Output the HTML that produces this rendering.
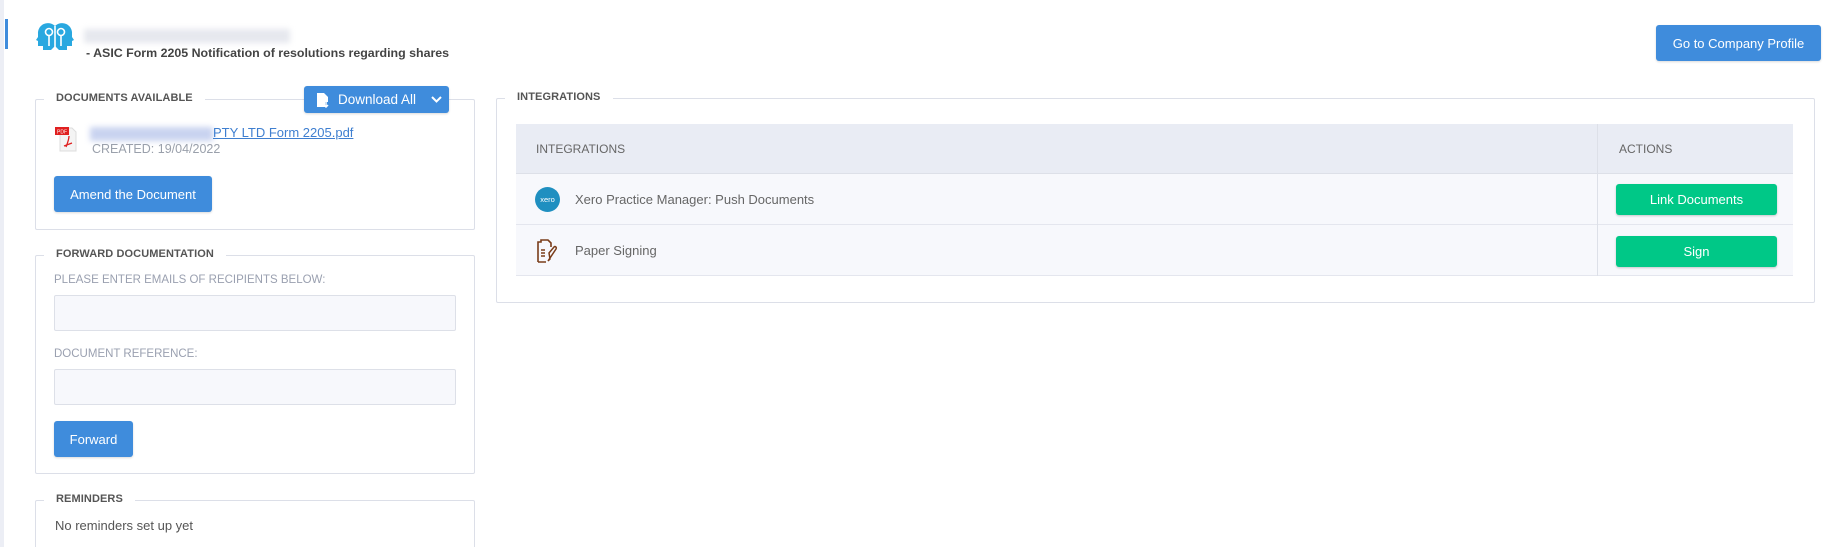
<!DOCTYPE html>
<html style="width:1840px;height:547px;overflow:hidden"><head><meta charset="utf-8">
<style>
*{box-sizing:border-box;margin:0;padding:0}
body{width:1840px;height:547px;overflow:hidden;background:#fff;font-family:"Liberation Sans",sans-serif;position:relative;color:#555}
.a{position:absolute}
.fs{position:absolute;border:1px solid #dcdfe8;border-radius:2px}
.lg{position:absolute;top:-8px;background:#fff;padding:0 12px;font-size:11px;font-weight:bold;color:#555;letter-spacing:.1px}
.btn{position:absolute;background:#3f8cdc;color:#fff;border-radius:3px;font-size:13px;display:flex;align-items:center;justify-content:center;box-shadow:0 1px 2px rgba(0,0,0,.15)}
.gbtn{position:absolute;background:#00c887;color:#fff;border-radius:3px;font-size:13px;display:flex;align-items:center;justify-content:center;box-shadow:0 1px 2px rgba(0,0,0,.2)}
.inp{position:absolute;background:#f7f8fc;border:1px solid #dde0e8;border-radius:2px}
.lbl{position:absolute;font-size:11.5px;color:#9aa0b0}
</style></head><body>
<div class="a" style="left:0;top:0;width:4px;height:547px;background:#eceef5"></div>
<div class="a" style="left:5px;top:19px;width:3px;height:30px;background:#3f8cdc"></div>
<svg class="a" style="left:36px;top:20px" width="38" height="30" viewBox="0 0 38 30">
<path d="M2 14a10 10 0 0 1 17-8 10 10 0 0 1 17 8v3l2 3-2 1v5h-5v4h-8l-4-4-4 4H7v-4H2v-5L0 20l2-3z" fill="#29a8e0"/>
<circle cx="13" cy="12" r="3.5" fill="none" stroke="#fff" stroke-width="1.6"/><circle cx="25" cy="12" r="3.5" fill="none" stroke="#fff" stroke-width="1.6"/>
<path d="M13 16v10M25 16v10M19 6v22" stroke="#fff" stroke-width="1.6"/></svg>
<div class="a" style="left:84px;top:29px;width:206px;height:14px;background:#e6e8ee;filter:blur(3px)"></div>
<div class="a" style="left:86px;top:46px;font-size:12.4px;font-weight:bold;color:#444">- ASIC Form 2205 Notification of resolutions regarding shares</div>
<div class="btn" style="left:1656px;top:25px;width:165px;height:36px">Go to Company Profile</div>

<div class="fs" style="left:35px;top:99px;width:440px;height:131px">
<div class="lg" style="left:8px">DOCUMENTS AVAILABLE</div></div>
<div class="btn" style="left:304px;top:86px;width:145px;height:27px;font-size:13.5px;justify-content:flex-start;padding-left:12px">
<svg width="14" height="16" viewBox="0 0 14 16"><path d="M1 1h7l4 4v5H9v5H1z" fill="#fff"/><path d="M10 10v5M8 13l2 2 2-2" stroke="#fff" stroke-width="1.5" fill="none"/></svg>
<span style="margin-left:8px">Download All</span>
<svg style="margin-left:15px" width="11" height="8" viewBox="0 0 11 8"><path d="M1 1l4.5 4.5L10 1" stroke="#fff" stroke-width="2" fill="none"/></svg></div>
<svg class="a" style="left:54px;top:126px" width="24" height="26" viewBox="0 0 24 26"><path d="M6 2h12l4 4v19H6z" fill="#f4f4f4" stroke="#ddd"/><rect x="1" y="1" width="14" height="8" fill="#e02020"/><text x="3" y="7.5" font-size="5" fill="#fff" font-family="Liberation Sans">PDF</text><path d="M12 21c2-5 3-9 3-11M10 20l8-3" stroke="#e02020" stroke-width="1.3" fill="none"/></svg>
<div class="a" style="left:90px;top:127px;width:123px;height:14px;background:#c9d3f0;filter:blur(3px)"></div>
<div class="a" style="left:213px;top:125px;font-size:13px;color:#3f7fd0;text-decoration:underline">PTY LTD Form 2205.pdf</div>
<div class="a" style="left:92px;top:142px;font-size:12.5px;color:#9aa0ab">CREATED: 19/04/2022</div>
<div class="btn" style="left:54px;top:176px;width:158px;height:36px">Amend the Document</div>

<div class="fs" style="left:35px;top:255px;width:440px;height:219px">
<div class="lg" style="left:8px">FORWARD DOCUMENTATION</div></div>
<div class="lbl" style="left:54px;top:274px">PLEASE ENTER EMAILS OF RECIPIENTS BELOW:</div>
<div class="inp" style="left:54px;top:295px;width:402px;height:36px"></div>
<div class="lbl" style="left:54px;top:348px">DOCUMENT REFERENCE:</div>
<div class="inp" style="left:54px;top:369px;width:402px;height:36px"></div>
<div class="btn" style="left:54px;top:421px;width:79px;height:36px">Forward</div>

<div class="fs" style="left:35px;top:500px;width:440px;height:52px">
<div class="lg" style="left:8px">REMINDERS</div></div>
<div class="a" style="left:55px;top:518px;font-size:13px;color:#555">No reminders set up yet</div>

<div class="fs" style="left:496px;top:98px;width:1319px;height:205px">
<div class="lg" style="left:8px">INTEGRATIONS</div></div>
<div class="a" style="left:516px;top:124px;width:1277px;height:152px;background:#f7f8fc">
<div class="a" style="left:0;top:0;width:1277px;height:50px;background:#e9ecf4;border-bottom:1px solid #dde0e8"></div>
<div class="a" style="left:0;top:100px;width:1277px;height:1px;background:#e4e6ee"></div>
<div class="a" style="left:0;top:151px;width:1277px;height:1px;background:#e4e6ee"></div>
<div class="a" style="left:1081px;top:0;width:1px;height:152px;background:#dde0e8"></div>
<div class="a" style="left:20px;top:18px;font-size:12px;color:#666">INTEGRATIONS</div>
<div class="a" style="left:1103px;top:18px;font-size:12px;color:#666">ACTIONS</div>
<div class="a" style="left:19px;top:63px;width:25px;height:25px;border-radius:50%;background:#1f8fc0;color:#fff;font-size:7.5px;text-align:center;line-height:25px">xero</div>
<div class="a" style="left:59px;top:68px;font-size:13px;color:#666">Xero Practice Manager: Push Documents</div>
<svg class="a" style="left:19px;top:114px" width="24" height="26" viewBox="0 0 24 26"><path d="M3 24V4h3V2h7l3 3v4M3 24h8" stroke="#7a3d1a" stroke-width="1.6" fill="none"/><path d="M6 12h4M6 15h4M6 18h4" stroke="#7a3d1a" stroke-width="1.4"/><path d="M13 23l8-12c1-2-1-3-2-2l-5 6 1 6z" stroke="#7a3d1a" stroke-width="1.5" fill="none"/></svg>
<div class="a" style="left:59px;top:119px;font-size:13px;color:#666">Paper Signing</div>
<div class="gbtn" style="left:1100px;top:60px;width:161px;height:31px">Link Documents</div>
<div class="gbtn" style="left:1100px;top:112px;width:161px;height:31px">Sign</div>
</div>
</body></html>
